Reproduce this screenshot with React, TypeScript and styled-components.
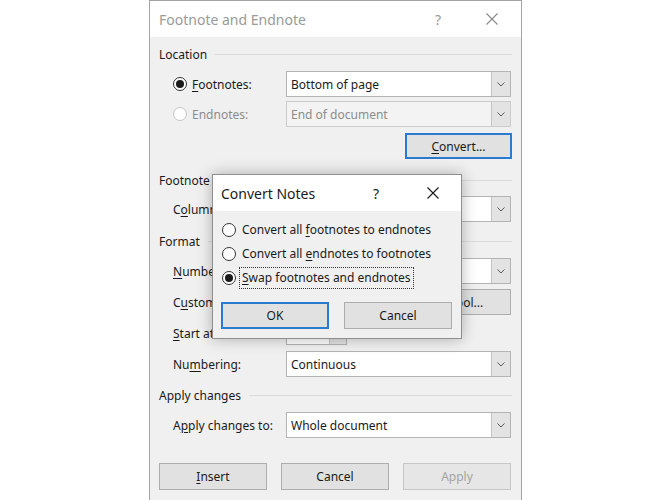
import React from 'react';
import styled, { createGlobalStyle } from 'styled-components';

const GlobalStyle = createGlobalStyle`
  html, body {
    margin: 0;
    padding: 0;
    background: #ffffff;
  }
  body {
    font-family: "Noto Sans", "Open Sans", sans-serif;
    font-size: 12px;
    color: #1a1a1a;
  }
  * { box-sizing: border-box; }
`;

const Page = styled.div`
  position: relative;
  width: 670px;
  height: 500px;
  overflow: hidden;
  background: #fff;
`;

const Dialog = styled.div`
  margin-left: 149px;
  width: 373px;
  height: 540px;
  border: 1px solid #a3a3a3;
  background: #f0f0f0;
  display: flex;
  flex-direction: column;
`;

const TitleBar = styled.div<{ $h: number }>`
  height: ${p => p.$h}px;
  flex: none;
  background: #fff;
  display: flex;
  align-items: center;
`;

const Title = styled.div<{ $active?: boolean; $pad: number }>`
  flex: 1;
  padding-left: ${p => p.$pad}px;
  font-size: 14px;
  color: ${p => (p.$active ? '#1a1a1a' : '#9a9a9a')};
`;

const CaptionButton = styled.div<{ $active?: boolean; $mr?: number; $ml?: number }>`
  width: 46px;
  height: 100%;
  margin-right: ${p => p.$mr ?? 0}px;
  margin-left: ${p => p.$ml ?? 0}px;
  display: flex;
  align-items: center;
  justify-content: center;
  font-size: 14px;
  color: ${p => (p.$active ? '#1a1a1a' : '#9a9a9a')};
`;

const Body = styled.div`
  padding: 0 9px 0 9px;
  display: flex;
  flex-direction: column;
`;

const Heading = styled.div<{ $mt: number }>`
  margin-top: ${p => p.$mt}px;
  height: 20px;
  display: flex;
  align-items: center;
  gap: 8px;
  &::after {
    content: '';
    flex: 1;
    border-top: 1px solid #dcdcdc;
    margin-top: 1px;
  }
`;

const Row = styled.div<{ $mt: number; $h?: number }>`
  margin-top: ${p => p.$mt}px;
  height: ${p => p.$h ?? 26}px;
  display: flex;
  align-items: center;
  padding-left: 14px;
`;

const Label = styled.div<{ $disabled?: boolean }>`
  width: 113px;
  flex: none;
  display: flex;
  align-items: center;
  gap: 5px;
  color: ${p => (p.$disabled ? '#8c8c8c' : '#1a1a1a')};
`;

const U = styled.span`
  text-decoration: underline;
  text-underline-offset: 2px;
  text-decoration-thickness: 1px;
`;

const RadioCircle = styled.span<{ $checked?: boolean; $disabled?: boolean }>`
  width: 14px;
  height: 14px;
  flex: none;
  border-radius: 50%;
  border: 1px solid ${p => (p.$disabled ? '#c6c6c6' : '#333')};
  background: #fff;
  display: flex;
  align-items: center;
  justify-content: center;
  &::after {
    content: '';
    width: 8px;
    height: 8px;
    border-radius: 50%;
    background: #1a1a1a;
    display: ${p => (p.$checked ? 'block' : 'none')};
  }
`;

const SelectBox = styled.div<{ $disabled?: boolean; $w?: number }>`
  width: ${p => p.$w ?? 225}px;
  height: 100%;
  display: flex;
  border: 1px solid ${p => (p.$disabled ? '#cccccc' : '#b4b4b4')};
  background: ${p => (p.$disabled ? '#f3f3f3' : '#fff')};
  color: ${p => (p.$disabled ? '#8c8c8c' : '#1a1a1a')};
`;

const SelectText = styled.div`
  flex: 1;
  display: flex;
  align-items: center;
  padding-left: 4px;
`;

const ArrowBox = styled.div<{ $w?: number }>`
  width: ${p => p.$w ?? 19}px;
  flex: none;
  background: #e3e3e3;
  border-left: 1px solid #c4c4c4;
  display: flex;
  align-items: center;
  justify-content: center;
`;

const Button = styled.div<{ $focused?: boolean; $disabled?: boolean; $w?: number; $h?: number }>`
  width: ${p => p.$w ?? 108}px;
  height: ${p => p.$h ?? 27}px;
  display: flex;
  align-items: center;
  justify-content: center;
  background: ${p => (p.$disabled ? '#e6e6e6' : '#e1e1e1')};
  border: ${p => (p.$focused ? '2px solid #2a7bd0' : p.$disabled ? '1px solid #c6c6c6' : '1px solid #adadad')};
  color: ${p => (p.$disabled ? '#a3a3a3' : '#1a1a1a')};
`;

const ButtonRow = styled.div<{ $mt: number; $gap: number }>`
  margin-top: ${p => p.$mt}px;
  display: flex;
  gap: ${p => p.$gap}px;
`;

const RightAligned = styled.div<{ $mt: number }>`
  margin-top: ${p => p.$mt}px;
  display: flex;
  justify-content: flex-end;
`;

const MarkInput = styled.div`
  width: 108px;
  height: 100%;
  background: #fff;
  border: 1px solid #b4b4b4;
  margin-right: 10px;
`;

const Overlay = styled.div`
  position: absolute;
  left: 212px;
  top: 174px;
  width: 250px;
  height: 165px;
  border: 1px solid #8f8f8f;
  background: #f0f0f0;
  box-shadow: 0 0 14px rgba(0, 0, 0, 0.28);
  display: flex;
  flex-direction: column;
`;

const OverlayBody = styled.div`
  padding: 7px 9px 0 8px;
  display: flex;
  flex-direction: column;
`;

const OptionRow = styled.div`
  height: 24px;
  display: flex;
  align-items: center;
  gap: 6px;
  padding-left: 1px;
  line-height: 16px;
`;

const FocusText = styled.span<{ $focused?: boolean }>`
  outline: ${p => (p.$focused ? '1px dotted #333' : 'none')};
  outline-offset: 2px;
`;

const Chevron = () => (
  <svg width="8" height="5" viewBox="0 0 8 5">
    <polyline points="0.5,0.5 4,4 7.5,0.5" fill="none" stroke="#5a5a5a" strokeWidth="1" />
  </svg>
);

const CloseIcon: React.FC<{ color: string }> = ({ color }) => (
  <svg width="12" height="12" viewBox="0 0 12 12">
    <path d="M0.5 0.5 L11.5 11.5 M11.5 0.5 L0.5 11.5" stroke={color} strokeWidth="1.1" />
  </svg>
);

const Select: React.FC<{ value: string; disabled?: boolean }> = ({ value, disabled }) => (
  <SelectBox $disabled={disabled}>
    <SelectText>{value}</SelectText>
    <ArrowBox>
      <Chevron />
    </ArrowBox>
  </SelectBox>
);

const Spinner = () => (
  <SelectBox $w={61}>
    <SelectText>1</SelectText>
    <ArrowBox $w={17}>
      <Chevron />
    </ArrowBox>
  </SelectBox>
);

const ConvertNotes = () => (
  <Overlay>
    <TitleBar $h={36}>
      <Title $active $pad={8}>Convert Notes</Title>
      <CaptionButton $active>?</CaptionButton>
      <CaptionButton $active $mr={5} $ml={11}>
        <CloseIcon color="#1a1a1a" />
      </CaptionButton>
    </TitleBar>
    <OverlayBody>
      <OptionRow>
        <RadioCircle />
        <span>Convert all <U>f</U>ootnotes to endnotes</span>
      </OptionRow>
      <OptionRow>
        <RadioCircle />
        <span>Convert all <U>e</U>ndnotes to footnotes</span>
      </OptionRow>
      <OptionRow>
        <RadioCircle $checked />
        <FocusText $focused><U>S</U>wap footnotes and endnotes</FocusText>
      </OptionRow>
      <ButtonRow $mt={12} $gap={15}>
        <Button $focused>OK</Button>
        <Button>Cancel</Button>
      </ButtonRow>
    </OverlayBody>
  </Overlay>
);

export default function App() {
  return (
    <Page>
      <GlobalStyle />
      <Dialog>
        <TitleBar $h={36}>
          <Title $pad={9}>Footnote and Endnote</Title>
          <CaptionButton>?</CaptionButton>
          <CaptionButton $mr={6} $ml={8}>
            <CloseIcon color="#8a8a8a" />
          </CaptionButton>
        </TitleBar>
        <Body>
          <Heading $mt={7}>Location</Heading>
          <Row $mt={7}>
            <Label>
              <RadioCircle $checked />
              <span><U>F</U>ootnotes:</span>
            </Label>
            <Select value="Bottom of page" />
          </Row>
          <Row $mt={4}>
            <Label $disabled>
              <RadioCircle $disabled />
              <span>Endnotes:</span>
            </Label>
            <Select value="End of document" disabled />
          </Row>
          <RightAligned $mt={6}>
            <Button $focused $w={107} $h={26}>
              <span><U>C</U>onvert...</span>
            </Button>
          </RightAligned>
          <Heading $mt={11}>Footnote layout</Heading>
          <Row $mt={6}>
            <Label>
              <span>C<U>o</U>lumns:</span>
            </Label>
            <Select value="Match section layout" />
          </Row>
          <Heading $mt={9}>Format</Heading>
          <Row $mt={7}>
            <Label>
              <span><U>N</U>umber format:</span>
            </Label>
            <Select value="1, 2, 3, ..." />
          </Row>
          <Row $mt={5}>
            <Label>
              <span>C<U>u</U>stom mark:</span>
            </Label>
            <MarkInput />
            <Button $w={107} $h={26}>Symbol...</Button>
          </Row>
          <Row $mt={6} $h={24}>
            <Label>
              <span><U>S</U>tart at:</span>
            </Label>
            <Spinner />
          </Row>
          <Row $mt={6}>
            <Label>
              <span>Nu<U>m</U>bering:</span>
            </Label>
            <Select value="Continuous" />
          </Row>
          <Heading $mt={8}>Apply changes</Heading>
          <Row $mt={7}>
            <Label>
              <span>A<U>p</U>ply changes to:</span>
            </Label>
            <Select value="Whole document" />
          </Row>
          <ButtonRow $mt={25} $gap={14}>
            <Button><span><U>I</U>nsert</span></Button>
            <Button>Cancel</Button>
            <Button $disabled>Apply</Button>
          </ButtonRow>
        </Body>
      </Dialog>
      <ConvertNotes />
    </Page>
  );
}
